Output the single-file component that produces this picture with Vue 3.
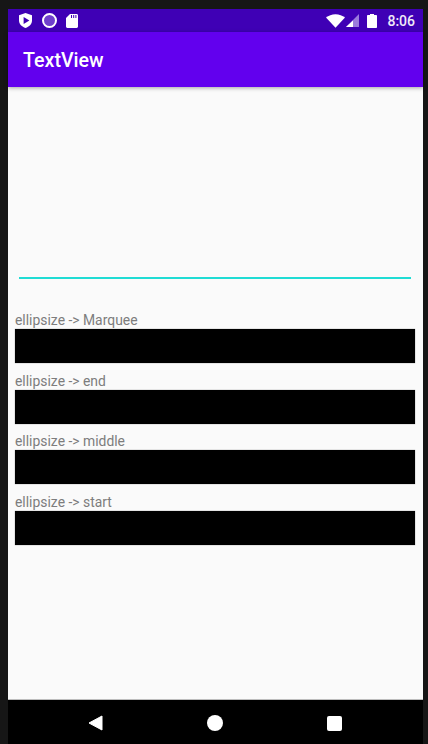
<template>
  <div class="device">
    <div class="screen">
      <div class="status-bar">
        <div class="status-left">
          <svg class="ic-shield" viewBox="0 0 14 16">
            <path fill="#fff" d="M7 0 L14 2.4 V8 C14 12 10.8 14.8 7 16 C3.2 14.8 0 12 0 8 V2.4 Z" />
            <path fill="#3f00b5" d="M5 4.2 L11.2 8 L5 11.8 Z" />
          </svg>
          <svg class="ic-circle" viewBox="0 0 15 15">
            <circle cx="7.5" cy="7.5" r="6.5" fill="#6f3fcc" stroke="#fff" stroke-width="2" />
          </svg>
          <svg class="ic-sd" viewBox="0 0 12 14">
            <path fill="#fff" d="M4 0 H10.6 C11.4 0 12 .6 12 1.4 V12.6 C12 13.4 11.4 14 10.6 14 H1.4 C.6 14 0 13.4 0 12.6 V4 Z" />
            <path stroke="#3f00b5" stroke-width="1" d="M5.5 1 V4 M7.7 1 V4 M9.9 1 V4" />
          </svg>
        </div>
        <div class="status-right">
          <svg class="ic-wifi" viewBox="0 0 18 13">
            <path fill="#fff" d="M9 13 L0 3.2 C2.4 1.2 5.5 0 9 0 C12.5 0 15.6 1.2 18 3.2 Z" />
          </svg>
          <svg class="ic-signal" viewBox="0 0 13 13">
            <path fill="#9a7bdc" d="M13 0 V13 H0 Z" />
            <path fill="#fff" d="M7 6.4 V13 H0 Z" />
          </svg>
          <svg class="ic-battery" viewBox="0 0 10 14">
            <path fill="#fff" d="M3 0 H7 V1 H9.2 C9.7 1 10 1.3 10 1.8 V13.2 C10 13.7 9.7 14 9.2 14 H.8 C.3 14 0 13.7 0 13.2 V1.8 C0 1.3 .3 1 .8 1 H3 Z" />
          </svg>
          <span class="clock">8:06</span>
        </div>
      </div>
      <div class="toolbar">TextView</div>
      <div class="content">
        <div class="input-line"></div>
        <div class="rows">
          <div v-for="row in rows" :key="row" class="row">
            <div class="row-label">{{ row }}</div>
            <div class="row-box"></div>
          </div>
        </div>
      </div>
      <div class="nav-bar">
        <svg class="nav-back" viewBox="0 0 15 16">
          <path fill="#fff" stroke="#fff" stroke-width="1" stroke-linejoin="round" d="M14 1 V15 L1 8 Z" />
        </svg>
        <div class="nav-home"></div>
        <div class="nav-recent"></div>
      </div>
    </div>
  </div>
</template>

<script setup>
const rows = [
  'ellipsize -> Marquee',
  'ellipsize -> end',
  'ellipsize -> middle',
  'ellipsize -> start',
]
</script>

<style>
html,
body {
  margin: 0;
  background: #161616;
}
</style>

<style scoped>
.device {
  width: 428px;
  height: 744px;
  box-sizing: border-box;
  padding: 9px 5px 0 8px;
  background: #161616;
  font-family: Roboto, "Liberation Sans", sans-serif;
  overflow: hidden;
}

.screen {
  height: 100%;
  display: flex;
  flex-direction: column;
}

.status-bar {
  height: 23px;
  flex: none;
  background: #3f00b5;
  display: flex;
  justify-content: space-between;
  align-items: center;
  padding: 0 8px 0 11px;
}

.status-left,
.status-right {
  display: flex;
  align-items: center;
}

.ic-shield {
  width: 13px;
  height: 15px;
}

.ic-circle {
  width: 15px;
  height: 15px;
  margin-left: 10px;
}

.ic-sd {
  width: 12px;
  height: 14px;
  margin-left: 9px;
}

.ic-wifi {
  width: 19px;
  height: 14px;
}

.ic-signal {
  width: 13px;
  height: 13px;
  margin-left: 1px;
}

.ic-battery {
  width: 10px;
  height: 14px;
  margin-left: 8px;
}

.clock {
  color: #f0eaf8;
  font-size: 14px;
  font-weight: 500;
  margin-left: 10px;
}

.toolbar {
  height: 55px;
  flex: none;
  box-sizing: border-box;
  padding: 1px 0 0 15px;
  display: flex;
  align-items: center;
  background: #6200ee;
  color: #fff;
  font-size: 19.6px;
  font-weight: 500;
  box-shadow: 0 1px 4px rgba(0, 0, 0, 0.35);
  position: relative;
}

.content {
  flex: 1;
  background: #fafafa;
  padding-top: 190px;
  box-sizing: border-box;
}

.input-line {
  height: 2px;
  margin: 0 12px 0 11px;
  background: #1fdcd4;
}

.rows {
  margin: 33px 8px 0 7px;
  display: flex;
  flex-direction: column;
  gap: 0.67px;
}

.row-label {
  height: 17px;
  line-height: 17px;
  font-size: 13.9px;
  color: #7d7d7d;
  white-space: nowrap;
}

.row-box {
  height: 34px;
  background: #000;
  box-shadow: 0 0 1px #777;
  margin-bottom: 9px;
}

.nav-bar {
  height: 45px;
  flex: none;
  background: #000;
  border-top: 1px solid #bdbdbd;
  box-sizing: border-box;
  display: flex;
  align-items: center;
  padding: 2px 0 0 80px;
}

.nav-back {
  width: 15px;
  height: 16px;
}

.nav-home {
  width: 16px;
  height: 16px;
  margin-left: 104px;
  border-radius: 50%;
  background: #fff;
}

.nav-recent {
  width: 15px;
  height: 15px;
  margin-left: 104px;
  border-radius: 2px;
  background: #fff;
}
</style>
